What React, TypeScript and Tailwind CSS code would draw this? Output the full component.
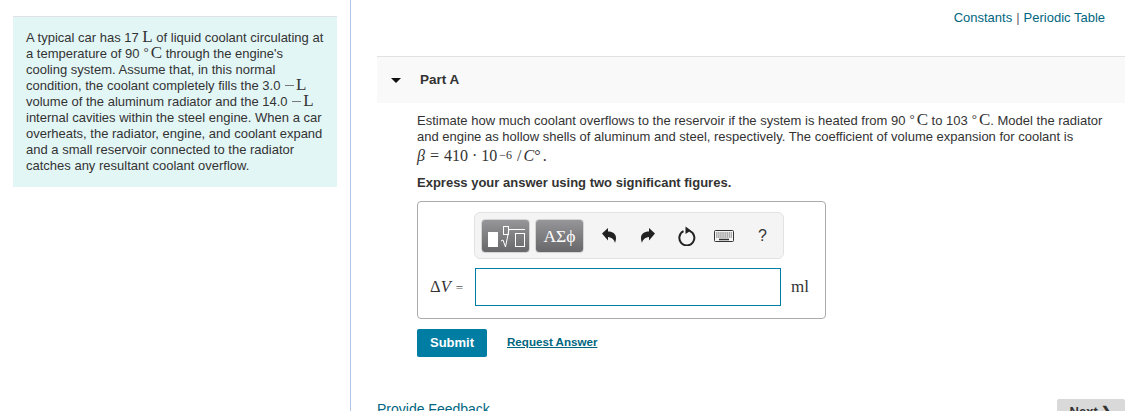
import React from "react";

const sans = "font-['Liberation_Sans',Arial,sans-serif]";
const serif = "font-['Liberation_Serif','Times_New_Roman',serif]";

function M({ children }: { children: React.ReactNode }) {
  return <span className={`${serif} text-[17px] leading-[0]`}>{children}</span>;
}

function Minus() {
  return <span className="mr-[2px] ml-[1px] inline-block h-[1px] w-[9px] bg-[#777] align-[4px]" />;
}

function Deg() {
  return <span className={`${serif} relative -top-[2px] ml-[4px] mr-[2px] text-[13px] leading-[0]`}>°</span>;
}

function Keyboard() {
  return (
    <svg width="20" height="12" viewBox="0 0 20 12" className="block">
      <rect x="0.5" y="0.5" width="19" height="11" rx="1" fill="#f4f4f4" stroke="#333" />
      <path d="M2 3h16M2 5h16M2 7h16" stroke="#666" strokeWidth="1" strokeDasharray="1.5 .6" />
      <path d="M5 9.500h10" stroke="#333" strokeWidth="1.500" />
    </svg>
  );
}

function Reset() {
  return (
    <svg width="18" height="20" viewBox="0 0 18 20" className="block">
      <path d="M5.500 5.200a7.500 7.500 0 1 0 6-.3" fill="none" stroke="#222" strokeWidth="2" />
      <path d="M7.500 0.500l5.500 4-5.500 3.500z" fill="#222" />
    </svg>
  );
}

function Arrow({ flip }: { flip?: boolean }) {
  return (
    <svg width="14" height="15" viewBox="0 0 14 15" className={flip ? "block -scale-x-100" : "block"}>
      <path d="M0 5.500L6 0v3.500c5 0 8 2.500 8 6.500 0 2-.5 3.500-1 5-.5-3-3-5.500-7-6v3.500z" fill="#222" />
    </svg>
  );
}

function ToolBtn({ children }: { children: React.ReactNode }) {
  return (
    <div className="flex h-[34px] w-[49px] items-center justify-center rounded-[4px] border border-[#d4d4d4] bg-gradient-to-b from-[#96969a] to-[#68686a] text-white">
      {children}
    </div>
  );
}

export default function App() {
  return (
    <div className={`${sans} flex h-[411px] w-[1135px] overflow-hidden bg-white text-[13px] leading-[16px] text-[#333]`}>
      {/* intro */}
      <div className="h-full w-[351px] shrink-0 border-r border-[#b4c6e7] pl-[13px] pt-[16px]">
        <div className="h-[171px] w-[324px] border-t border-[#dfe3e8] bg-[#e3f6f6] pl-[13px] pt-[13px]">
          A typical car has 17 <M>L</M> of liquid coolant circulating at<br />
          a temperature of 90<Deg /><M>C</M> through the engine's<br />
          cooling system. Assume that, in this normal<br />
          condition, the coolant completely fills the 3.0 <Minus /><M>L</M><br />
          volume of the aluminum radiator and the 14.0 <Minus /><M>L</M><br />
          internal cavities within the steel engine. When a car<br />
          overheats, the radiator, engine, and coolant expand<br />
          and a small reservoir connected to the radiator<br />
          catches any resultant coolant overflow.
        </div>
      </div>

      {/* part */}
      <div className="ml-[26px] flex h-full w-[748px] shrink-0 flex-col">
        <div className="flex h-[56px] shrink-0 justify-end pr-[20px] pt-[10px] text-[#00667f]">
          Constants <span className="mx-[4px] text-[#666]">|</span> Periodic Table
        </div>
        <div className="flex h-[47px] shrink-0 items-center border-t border-[#e2e2e2] bg-[#f9f9f9] pl-[14px]">
          <div className="h-0 w-0 border-x-[5px] border-t-[5px] border-x-transparent border-t-[#111]" />
          <span className="ml-[19px] text-[13.5px] font-bold">Part A</span>
        </div>

        <div className="pl-[40px] pt-[10px]">
          <p>
            Estimate how much coolant overflows to the reservoir if the system is heated from 90<Deg /><M>C</M> to 103<Deg /><M>C</M>. Model the radiator<br />
            and engine as hollow shells of aluminum and steel, respectively. The coefficient of volume expansion for coolant is
          </p>
          <p className={`${serif} mt-[3px] text-[16px] leading-[16px]`}>
            <i>β</i>
            <span className="ml-[5px]">=</span>
            <span className="ml-[5px]">410</span>
            <span className="ml-[4px]">·</span>
            <span className="ml-[4px]">10</span>
            <sup className="relative -top-[2px] ml-[2px] align-baseline text-[12px]">−6</sup>
            <span className="ml-[5px]">/</span>
            <i className="ml-[2px]">C</i>
            <span>°</span>
            <span className="ml-[2px]">.</span>
          </p>
          <p className="mt-[11px] font-bold">Express your answer using two significant figures.</p>

          {/* answer box */}
          <div className="mt-[10px] h-[118px] w-[409px] rounded-[4px] border border-[#aaa] pl-[56px] pt-[10px]">
            <div className="flex h-[47px] w-[310px] items-center rounded-[6px] border border-[#e2e2e2] bg-[#f4f4f4] pl-[6px]">
              <ToolBtn>
                <svg width="38" height="26" viewBox="0 0 38 26" className="block">
                  <rect x="1" y="9" width="10" height="15" fill="#fff" />
                  <rect x="16.500" y="3.500" width="5" height="8" fill="none" stroke="#fff" />
                  <path d="M14 18l2-1 2.500 7L22 6.500h16" fill="none" stroke="#fff" />
                  <rect x="28.500" y="10.500" width="9" height="13" fill="none" stroke="#fff" />
                </svg>
              </ToolBtn>
              <div className="ml-[5px]">
                <ToolBtn>
                  <span className={`${serif} text-[17.5px]`}>ΑΣϕ</span>
                </ToolBtn>
              </div>
              <div className="ml-[18px]"><Arrow /></div>
              <div className="ml-[25px]"><Arrow flip /></div>
              <div className="ml-[23px]"><Reset /></div>
              <div className="ml-[18px]"><Keyboard /></div>
              <span className="ml-[24px] text-[16px] text-[#333]">?</span>
            </div>
            <div className={`${serif} -ml-[56px] mt-[9px] flex h-[38px] items-center text-[16.5px]`}>
              <span className="w-[57px] pl-[12px]">Δ<i>V</i><span className="ml-[5px] text-[13px] text-[#555]">=</span></span>
              <div className="h-[38px] w-[306px] border border-[#007fa3] bg-white" />
              <span className="ml-[10px] text-[17px]">ml</span>
            </div>
          </div>

          <div className="mt-[10px] flex items-center">
            <button className="h-[28px] w-[70px] rounded-[2px] bg-[#007da3] text-[13px] font-bold text-white">Submit</button>
            <a className="relative -top-[1px] ml-[20px] text-[11.6px] font-bold text-[#00667f] underline">Request Answer</a>
          </div>
        </div>

        <div className="mt-[42px] flex items-start justify-between">
          <a className="mt-[2px] text-[14px] text-[#00667f]">Provide Feedback</a>
          <div className="flex h-[28px] w-[68px] justify-center rounded-[2px] bg-[#d9d9d9] pt-[5px] font-bold text-[#333]">Next ❯</div>
        </div>
      </div>
    </div>
  );
}
